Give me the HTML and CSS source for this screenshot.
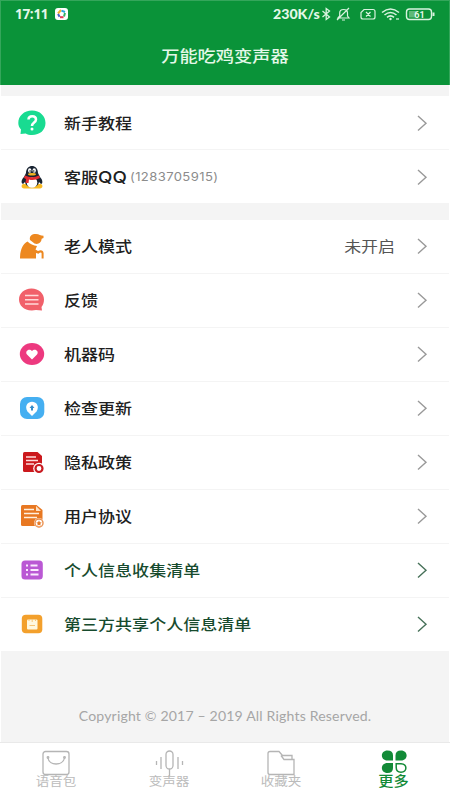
FILE: index.html
```html
<!DOCTYPE html>
<html lang="zh-CN">
<head>
<meta charset="utf-8">
<title>万能吃鸡变声器</title>
<link rel="stylesheet" href="styles.css">
</head>
<body>
<div class="app">
  <header class="header">
    <div class="status">
      <span class="time">17:11</span>
      <svg class="notice" width="13" height="12" viewBox="0 0 13 12"><rect width="13" height="12" rx="3" fill="#fff"/><path d="M3 5.5L6 2" stroke="#f1b52a" stroke-width="2"/><path d="M6.5 2.6L10 4" stroke="#28a5df" stroke-width="2"/><path d="M10 5L9 8.5" stroke="#35b163" stroke-width="2"/><path d="M8.5 9.2H5" stroke="#e43b55" stroke-width="2"/><path d="M4.6 8.8L3 6" stroke="#4761c6" stroke-width="2"/></svg>
      <span class="speed">230K/s</span>
      <svg class="sysicons" width="116" height="16" viewBox="0 0 116 16" fill="none" stroke="#d9f3df" stroke-width="1.2">
        <path d="M2.500 5L9.500 11L6.200 13.500V2.500L9.500 5L2.500 11" stroke-width="1.300"/>
        <path d="M18 12H29L27.500 10V7C27.500 4.500 26 3.500 23.500 3.500C21 3.500 19.700 5 19.700 7V10ZM22 14H25M17 14L29 2"/>
        <path d="M44 3.500H53Q55 3.500 55 5.500V11Q55 13 53 13H43Q41 13 41 11V6.500ZM46 6L50.500 10.500M50.500 6L46 10.500"/>
        <path d="M62 6.500Q70.500 -.5 79 6.500M64.500 9Q70.500 4 76.500 9M67 11.300Q70.500 8.500 74 11.300" stroke-width="1.600"/><circle cx="70.500" cy="13" r="1.200" fill="#d9f3df" stroke="none"/><path d="M76 13H79"/>
        <rect x="86.500" y="3" width="25" height="10.500" rx="3" stroke-width="1.400"/><path d="M113.500 6.500V10" stroke-width="2"/><path d="M89 5H96V11.500H89Z" fill="#5fb978" stroke="none"/>
        <text class="battery" x="99.500" y="11.500" text-anchor="middle">61</text>
      </svg>
    </div>
    <h1 class="title">万能吃鸡变声器</h1>
  </header>

  <main class="content">
    <section class="group">
      <div class="row">
        <svg class="icon" viewBox="0 0 32 32"><path d="M16 3.500C24 3.500 29.500 9 29.500 16S24 28 16 28C13.500 28 11.500 27.500 9.700 26.500L4.500 27L5 22.500C3.200 20.500 2.300 18.500 2.300 16C2.300 9 8 3.500 16 3.500Z" fill="#19db91"/><path d="M12.500 12.500C12.500 8 20 8 20 12.500C20 15.500 16 15.500 16 19" fill="none" stroke="#fff" stroke-width="2.500"/><circle cx="16" cy="22" r="1.500" fill="#fff"/></svg>
        <span class="label">新手教程</span>
        <svg class="arrow" viewBox="0 0 12 18"><path d="M2 2L10 9.200L2 16.500"/></svg>
      </div>
      <div class="row">
        <svg class="icon" viewBox="0 0 32 32"><path d="M7 23C5 24 5 27.300 8 27.500H24C27 27.300 27 24 25 23Z" fill="#f8b921"/><path d="M10 12C10 2.500 22 2.500 22 12L24 16C27 19 27 23 25 23L23 21C22 28 10 28 9 21L7 23C5 22 5 19 8 16Z" fill="#182331"/><ellipse cx="16" cy="21.500" rx="5.300" ry="5.300" fill="#fff"/><ellipse cx="13.700" cy="9.500" rx="1.700" ry="2.200" fill="#fff"/><ellipse cx="18.200" cy="9.500" rx="1.700" ry="2.200" fill="#fff"/><circle cx="14.100" cy="10" r=".7"/><circle cx="17.800" cy="10" r=".7"/><ellipse cx="16" cy="13.200" rx="4" ry="1.300" fill="#f4b521"/><path d="M9 14.500Q16 18 23 14.500L24 17Q18 20 13 18.500L12.500 22H9.500L10 18L8 17Z" fill="#e52c31"/></svg>
        <span class="label">客服<span class="qq">QQ</span></span><span class="qqnum">(1283705915)</span>
        <svg class="arrow" viewBox="0 0 12 18"><path d="M2 2L10 9.200L2 16.500"/></svg>
      </div>
    </section>

    <section class="group raised">
      <div class="row">
        <svg class="icon" viewBox="0 0 32 32" fill="#ed8820"><path d="M14 10C13 5.500 16.500 3.700 20 3.900C23 3.900 24.500 5.800 27.500 5.800V8L25.700 8.800C25.300 13 22 14.800 18.500 13.500Z"/><path d="M4 28.500C4 20.500 6.500 14 11.500 11.500C14 14 17.500 15.500 21 16L19.500 19.500L22 21C24.500 19.500 27.600 20 27.600 23.200V28.500H25.600V23.500C25.600 22 24 22.300 22.500 23.800L20 23V28.500Z"/></svg>
        <span class="label">老人模式</span><span class="value">未开启</span>
        <svg class="arrow" viewBox="0 0 12 18"><path d="M2 2L10 9.200L2 16.500"/></svg>
      </div>
      <div class="row">
        <svg class="icon" viewBox="0 0 32 32"><path d="M15.500 4.500C23 4.500 28 9.500 28 15.500C28 19 27 21 25.500 23L26 26.500L20 26C9 28 3 22 3 15.500C3 9.500 8 4.500 15.500 4.500Z" fill="#f1606a"/><path d="M9 11.500H22.500M9 15.800H22.500M9 20.100H22.500" stroke="#ffd9d9" stroke-width="1.500"/></svg>
        <span class="label">反馈</span>
        <svg class="arrow" viewBox="0 0 12 18"><path d="M2 2L10 9.200L2 16.500"/></svg>
      </div>
      <div class="row">
        <svg class="icon" viewBox="0 0 32 32"><ellipse cx="16" cy="16" rx="12.200" ry="11" fill="#ed397f"/><path d="M16 21.500L11 16.500C8.500 13.500 13 9.500 16 13C19 9.500 23.500 13.500 21 16.500Z" fill="#fff"/></svg>
        <span class="label">机器码</span>
        <svg class="arrow" viewBox="0 0 12 18"><path d="M2 2L10 9.200L2 16.500"/></svg>
      </div>
      <div class="row">
        <svg class="icon" viewBox="0 0 32 32"><rect x="4" y="5" width="24.300" height="22" rx="7" fill="#45aff1"/><path d="M16 24L11.500 19.500C8 14 12 9.800 16 9.800S24 14 20.500 19.500Z" fill="#fff"/><path d="M16 13L18.500 16H17V18.500H15V16H13.500Z" fill="#348dca"/></svg>
        <span class="label">检查更新</span>
        <svg class="arrow" viewBox="0 0 12 18"><path d="M2 2L10 9.200L2 16.500"/></svg>
      </div>
      <div class="row">
        <svg class="icon" viewBox="0 0 32 32"><path d="M8.500 6H21.500L26 10V26H8.500Q7 26 7 24.500V7.500Q7 6 8.500 6Z" fill="#cb191d"/><path d="M10 11H20M10 14.500H22M10 18H18" stroke="#ffdede" stroke-width="1.300"/><circle cx="23" cy="22.500" r="5.800" fill="#fff"/><circle cx="23" cy="22.500" r="3.500" fill="#fff" stroke="#c91a20" stroke-width="2.200"/></svg>
        <span class="label">隐私政策</span>
        <svg class="arrow" viewBox="0 0 12 18"><path d="M2 2L10 9.200L2 16.500"/></svg>
      </div>
      <div class="row">
        <svg class="icon" viewBox="0 0 32 32"><path d="M6.500 5H20.500L26.500 10V26H6.500Q5 26 5 24.500V6.500Q5 5 6.500 5Z" fill="#e87822"/><path d="M8 9.500H18M8 13.500H23M8 17.500H21" stroke="#fff0df" stroke-width="1.400"/><path d="M20 6L25 11H20Z" fill="#ffe1c2"/><circle cx="23" cy="23" r="5" fill="#fff0e5"/><circle cx="23" cy="23" r="4" fill="#fff" stroke="#e98d4a" stroke-width="1.300"/><path d="M23 20.300L23.800 22.200L25.700 22.500L24.300 23.800L24.600 25.700L23 24.800L21.400 25.700L21.700 23.800L20.300 22.500L22.200 22.200Z" fill="#e87822"/></svg>
        <span class="label">用户协议</span>
        <svg class="arrow" viewBox="0 0 12 18"><path d="M2 2L10 9.200L2 16.500"/></svg>
      </div>
      <div class="row green">
        <svg class="icon" viewBox="0 0 32 32"><rect x="5.500" y="6.500" width="21.300" height="19" rx="3.500" fill="#ba58d4"/><path d="M10 11.500H12M10 16H12M10 20.500H12M14.500 11.500H21.500M14.500 16H22.500M14.500 20.500H22.500" stroke="#fbeaff" stroke-width="2"/></svg>
        <span class="label">个人信息收集清单</span>
        <svg class="arrow" viewBox="0 0 12 18"><path d="M2 2L10 9.200L2 16.500"/></svg>
      </div>
      <div class="row green">
        <svg class="icon" viewBox="0 0 32 32"><rect x="5.800" y="6.800" width="20.500" height="18.500" rx="4" fill="#f3a02c"/><rect x="11" y="11.500" width="10.500" height="10" rx="1" fill="#fff8df"/><path d="M13 11V13M16.200 11V14M19.500 11V13M13.500 17.500H19" stroke="#f7c574" stroke-width="1"/></svg>
        <span class="label">第三方共享个人信息清单</span>
        <svg class="arrow" viewBox="0 0 12 18"><path d="M2 2L10 9.200L2 16.500"/></svg>
      </div>
    </section>
    <p class="copyright"><span class="copytext">Copyright © 2017 – 2019 All Rights Reserved.</span></p>
  </main>

  <nav class="tabs">
    <div class="tab">
      <svg class="tabicon" viewBox="0 0 32 28"><rect x="3" y="2.500" width="26" height="23" rx="2.500"/><path d="M8 9C9 17 23 17 24.500 9"/><circle cx="8" cy="8.500" r=".8"/><circle cx="24.500" cy="8.500" r=".8"/></svg>
      <span class="tabname">语音包</span>
    </div>
    <div class="tab">
      <svg class="tabicon" viewBox="0 0 32 28"><path d="M13 5.500A3.500 3.500 0 0 1 20 5.500V16.500A3.500 3.500 0 0 1 13 16.500ZM16.500 20V27M8 8V20M25 8V20M3.500 12V16M29.500 12V16"/></svg>
      <span class="tabname">变声器</span>
    </div>
    <div class="tab">
      <svg class="tabicon" viewBox="0 0 32 28"><path d="M5 2.500H14L17.500 6.500H27V10.500H29V25.500H5Q3 25.500 3 23.500V4.500Q3 2.500 5 2.500ZM16 6.500L19 10.500H29"/></svg>
      <span class="tabname">收藏夹</span>
    </div>
    <div class="tab active">
      <svg class="tabicon" viewBox="0 0 32 28"><path class="leaf" d="M15 11.500H9.500C2 11.500 2 1.500 9.500 1.500Q15 1.500 15 6.500ZM17.500 11.500V6.500Q17.500 1.500 23 1.500C30.500 1.500 30.500 11.500 23 11.500ZM15 14V19Q15 24 9.500 24C2 24 2 14 9.500 14Z"/><path d="M18.200 14.700H23C29.500 15 29.500 23.200 23 23.200Q18.200 23 18.200 18.500Z" stroke-width="1.500"/></svg>
      <span class="tabname">更多</span>
    </div>
  </nav>
</div>
</body>
</html>
```
FILE: styles.css
```css
* { box-sizing: border-box; }
body {
  margin: 0;
  background: #fff;
  font-family: "Noto Sans CJK SC", sans-serif;
}
.app {
  width: 450px;
  height: 800px;
  display: flex;
  flex-direction: column;
  overflow: hidden;
}
.header {
  height: 85px;
  background: #0a9339;
  border-top: 1px solid #34a65b;
  border-left: 1px solid #34a65b;
  border-right: 1px solid #34a65b;
  color: #e4f8e8;
}
.status {
  height: 26px;
  display: flex;
  align-items: center;
  padding-left: 14px;
  font-family: "Open Sans", sans-serif;
  font-weight: 700;
  white-space: nowrap;
}
.time { width: 33px; font-size: 13.5px; letter-spacing: -0.3px; }
.notice { margin-left: 7px; }
.speed {
  font-family: Lato, sans-serif;
  font-weight: 900;
  font-size: 12.5px;
  width: 46px;
  margin-left: 205px;
  transform: scaleX(1.13);
  transform-origin: left;
}
.sysicons { margin-left: 1px; flex: none; }
.battery { fill: #e4f8e8; stroke: none; font-family: Roboto, sans-serif; font-size: 9px; }
.title {
  margin: 16px 0 0;
  text-align: center;
  font-size: 16px;
  line-height: 24px;
  font-weight: 500;
  transform: scaleX(1.14);
}
.content {
  flex: 1;
  margin: 0 1px;
  padding-top: 11px;
  background: #f4f4f4;
}
.group { margin-bottom: 16px; background: #fff; }
.row {
  height: 54px;
  display: flex;
  align-items: center;
  padding: 0 21px 0 15px;
  border-bottom: 1px solid #f4f4f4;
  color: #202020;
}
.raised .row { padding-bottom: 1px; }
.raised .label, .raised .value { margin-top: -1px; }
.icon { width: 32px; height: 32px; flex: none; margin-right: 16px; }
.label {
  font-size: 15px;
  font-weight: 500;
  white-space: nowrap;
  transform: scaleX(1.135);
  transform-origin: left;
}
.qq {
  font-family: Inter, sans-serif;
  font-size: 16.5px;
}
.qqnum {
  margin-left: 11px;
  color: #8c8c8c;
  font-family: Inter, sans-serif;
  font-size: 12px;
  letter-spacing: 0.35px;
  transform: scaleX(1.09);
  transform-origin: left;
}
.value {
  margin-left: auto;
  color: #555;
  font-size: 15px;
  transform: scaleX(1.13);
  transform-origin: right;
}
.arrow {
  width: 12px;
  height: 18px;
  flex: none;
  margin-left: auto;
  fill: none;
  stroke: #999;
  stroke-width: 1.4;
}
.value + .arrow { margin-left: 21px; }
.green { color: #174b2e; }
.green .arrow { stroke: #477159; }
.copyright {
  margin: 55px 0 0;
  text-align: center;
  color: #a6a6a6;
  font-family: Lato, sans-serif;
  font-size: 12.5px;
  line-height: 20px;
  white-space: nowrap;
}
.copytext { display: inline-block; transform: scaleX(1.125); letter-spacing: 0.15px; }
.tabs {
  height: 58px;
  display: flex;
  background: #fff;
  border-top: 1px solid #e9e9e9;
}
.tab {
  flex: 1;
  display: flex;
  flex-direction: column;
  align-items: center;
  padding-top: 6px;
  color: #bbb;
}
.tabicon { width: 32px; height: 28px; flex: none; fill: none; stroke: #b5b5b5; stroke-width: 1.3; }
.tabname {
  margin-top: -6px;
  font-size: 12px;
  line-height: 19px;
  font-weight: 400;
  transform: scaleX(1.13);
}
.active { color: #128a37; }
.active .tabicon { stroke: #128a37; }
.active .leaf { fill: #128a37; stroke: none; }
.active .tabname { font-size: 13.5px; font-weight: 500; }
```
